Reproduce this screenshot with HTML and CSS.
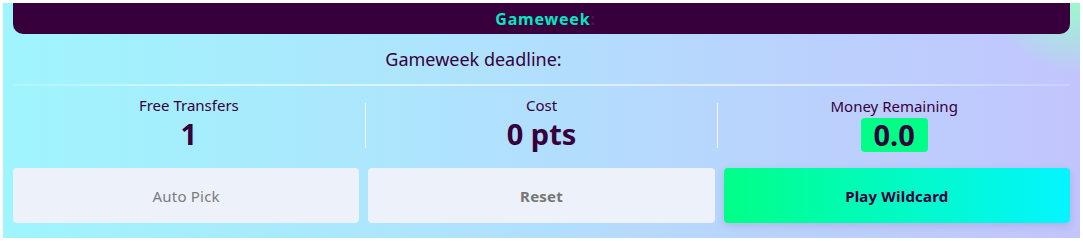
FILE: index.html
```html
<!DOCTYPE html>
<html>
<head>
<meta charset="utf-8">
<link rel="stylesheet" href="styles.css">
</head>
<body>
<div class="panel">
  <div class="header"><span class="gw">Gameweek</span><span class="colon"> :</span></div>
  <div class="deadline">Gameweek deadline:</div>
  <div class="rule"></div>
  <div class="stats">
    <div class="stat">
      <div class="label">Free Transfers</div>
      <div class="value">1</div>
    </div>
    <div class="sep"></div>
    <div class="stat">
      <div class="label">Cost</div>
      <div class="value">0 pts</div>
    </div>
    <div class="sep"></div>
    <div class="stat">
      <div class="label">Money Remaining</div>
      <div class="value money">0.0</div>
    </div>
  </div>
  <div class="buttons">
    <button class="btn auto">Auto Pick</button>
    <button class="btn reset">Reset</button>
    <button class="btn wildcard">Play Wildcard</button>
  </div>
</div>
</body>
</html>
```
FILE: styles.css
```css
html, body { margin: 0; padding: 0; background: #fff; }
body { font-family: "Noto Sans", Lato, sans-serif; color: #37003c; }
.panel {
  margin: 3px;
  width: 1057px;
  height: 235px;
  padding: 0 10px;
  box-sizing: content-box;
  background:
    radial-gradient(ellipse 90px 70px at 100% 0%, rgba(150,255,200,0.9), rgba(150,255,200,0) 100%),
    linear-gradient(to right, #9ff5fd 0%, #aee4fd 40%, #b9d4fd 70%, #c2c5fd 100%);
  display: flex;
  flex-direction: column;
}
.header {
  height: 31px;
  background: #37003c;
  border-radius: 0 0 10px 10px;
  display: flex;
  align-items: center;
  justify-content: center;
  padding-left: 8px;
  font-weight: 700;
  font-size: 16px;
  letter-spacing: 0.8px;
}
.gw { color: #05e6c2; }
.colon { color: #4a1a55; }
.deadline {
  height: 50px;
  display: flex;
  align-items: center;
  justify-content: center;
  padding-right: 136px;
  font-size: 18px;
}
.rule {
  height: 2px;
  background: linear-gradient(to right, rgba(255,255,255,0.15), rgba(255,255,255,0.55) 20%, rgba(255,255,255,0.55) 80%, rgba(255,255,255,0.15));
}
.stats {
  display: flex;
  align-items: center;
  height: 70px;
  padding-top: 6px;
  box-sizing: border-box;
}
.stat {
  flex: 1;
  display: flex;
  flex-direction: column;
  align-items: center;
}
.sep {
  width: 1px;
  height: 45px;
  background: rgba(255,255,255,0.85);
  margin-top: 2px;
}
.label { font-size: 15px; line-height: 18px; }
.value {
  font-size: 29px;
  font-weight: 700;
  line-height: 36px;
  margin-top: 2px;
}
.money {
  background: #00ff87;
  border-radius: 4px;
  padding: 0 13px;
  line-height: 34px;
  margin-top: 3px;
}
.buttons {
  display: flex;
  gap: 9px;
  margin-top: 12px;
}
.btn {
  flex: 1;
  height: 55px;
  border: 0;
  border-radius: 4px;
  background: #edf1fa;
  font-family: "Noto Sans", Lato, sans-serif;
  font-size: 15px;
  letter-spacing: 0.2px;
  color: #7b7b7b;
}
.reset { font-weight: 700; color: #767676; }
.wildcard {
  font-weight: 700;
  color: #37003c;
  background: linear-gradient(to right, #00ff87, #04f5ff);
  box-shadow: 0 3px 8px rgba(55,0,60,0.12);
}
```
